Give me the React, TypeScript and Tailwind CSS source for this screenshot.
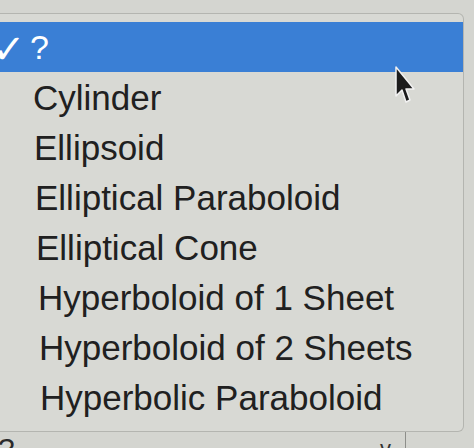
import React from "react";

const items = [
  { label: "Cylinder", pad: "pl-[33px]" },
  { label: "Ellipsoid", pad: "pl-[34px]" },
  { label: "Elliptical Paraboloid", pad: "pl-[35px]" },
  { label: "Elliptical Cone", pad: "pl-[36px]" },
  { label: "Hyperboloid of 1 Sheet", pad: "pl-[38px]" },
  { label: "Hyperboloid of 2 Sheets", pad: "pl-[39px]" },
  { label: "Hyperbolic Paraboloid", pad: "pl-[40px]" },
];

function Cursor() {
  return (
    <svg
      className="absolute left-[395px] top-[66px]"
      width="20"
      height="40"
      viewBox="0 0 20 40"
    >
      <path
        d="M1 1 L1 30 L7 24 L11 36 L15 34 L11 23 L19 23 Z"
        fill="#1c1c1c"
        stroke="#f2f2f2"
        strokeWidth="1.5"
        strokeLinejoin="round"
      />
    </svg>
  );
}

export default function App() {
  return (
    <div className="relative w-[474px] h-[448px] overflow-hidden bg-[#d4d5d0] font-['Liberation_Sans',Arial,sans-serif]">
      <div className="flex flex-col">
        {/* popup menu */}
        <div className="mt-[13px] w-[464px] border-y border-r border-[#b4b5b0] rounded-r-[6px] bg-[#d8d9d4] pt-[8px] pb-[9px]">
          <div className="flex h-[50px] items-center bg-[#3a7fd5] text-white text-[34px] leading-none">
            <span className="-ml-[8px] w-[38px] pt-[4px] font-['DejaVu_Sans',sans-serif] text-[40px]">✓</span>
            <span>?</span>
          </div>
          {items.map((item) => (
            <div
              key={item.label}
              className={`flex h-[50px] items-center text-[35px] leading-none text-[#202020] ${item.pad}`}
            >
              {item.label}
            </div>
          ))}
        </div>

        {/* page content peeking below the menu */}
        <div className="flex h-[20px] items-start">
          <span className="-ml-[2px] mt-[2px] text-[30px] leading-none text-[#2a2a2a]">?</span>
          <span className="ml-auto mt-[6px] text-[22px] leading-none text-[#333]">v</span>
          <div className="ml-[14px] mr-[68px] w-px h-full bg-[#8d8e8a]" />
        </div>
      </div>
      <Cursor />
    </div>
  );
}
